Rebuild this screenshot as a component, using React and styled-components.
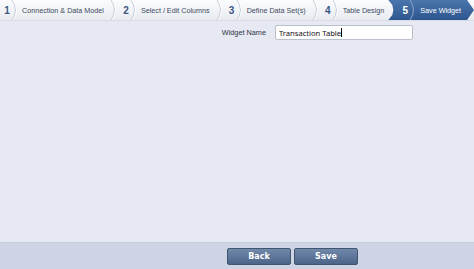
import styled, { createGlobalStyle } from "styled-components";

const Global = createGlobalStyle`
  html, body { margin: 0; padding: 0; }
  body { font-family: "Liberation Sans", Arial, sans-serif; background: #e6e9f2; }
`;

const Page = styled.div`
  width: 474px;
  height: 269px;
  display: flex;
  flex-direction: column;
  background: #e6e9f2;
`;

const Steps = styled.div`
  height: 20px;
  display: flex;
  align-items: stretch;
  background: linear-gradient(#fbfcfd, #e8ebf1);
  border-bottom: 1px solid #d6dbe5;
`;

const Step = styled.div`
  display: flex;
  align-items: center;
  color: #3d4a60;
`;

const ActiveStep = styled(Step)`
  padding-right: 13px;
  color: #ffffff;
  background: linear-gradient(#4a76ad, #2e568e);
  clip-path: polygon(0 0, calc(100% - 7px) 0, 100% 50%, calc(100% - 7px) 100%, 0 100%, 4px 75%, 5px 50%, 4px 25%);
`;

const Num = styled.span`
  font-size: 10px;
  font-weight: bold;
  color: ${p => p.$active ? "#ffffff" : "#3a5684"};
  width: 8px;
  padding-left: ${p => p.$pl}px;
  text-align: center;
`;

const Label = styled.span`
  font-size: 7.2px;
  white-space: nowrap;
  padding: 0 ${p => p.$pr ?? 6}px 0 4px;
`;

const Chevron = ({ light }) => (
  <svg width="7" height="20" viewBox="0 0 7 20">
    <path d="M1 0 Q8 10 1 20" fill="none" stroke={light ? "#8aa3c7" : "#c2c8d4"} strokeWidth="1" />
    {!light && <path d="M2 0 Q9 10 2 20" fill="none" stroke="#ffffff" strokeWidth="0.8" />}
  </svg>
);

const Body = styled.div`
  flex: 1;
  display: flex;
  justify-content: flex-end;
  align-items: flex-start;
  padding: 4px 61px 0 0;
`;

const Field = styled.div`
  display: flex;
  align-items: center;
  gap: 9px;
`;

const FieldLabel = styled.label`
  font-size: 7.3px;
  color: #2c3444;
`;

const Input = styled.div`
  box-sizing: border-box;
  width: 138px;
  height: 15px;
  background: #fff;
  border: 1px solid #b9c0cc;
  border-radius: 2px;
  font-family: "Noto Sans", sans-serif;
  font-size: 7.6px;
  color: #111;
  display: flex;
  align-items: center;
  padding-left: 3px;
  &::after {
    content: "";
    width: 1px;
    height: 9px;
    background: #000;
  }
`;

const Footer = styled.div`
  height: 27px;
  background: #ced4e3;
  border-top: 1px solid #c4cbdb;
  display: flex;
  justify-content: center;
  align-items: center;
  gap: 3px;
  padding-left: 111px;
  box-sizing: border-box;
`;

const Button = styled.button`
  width: 64px;
  height: 17px;
  border: 1px solid #405670;
  border-radius: 2px;
  background: linear-gradient(#7089ab, #4b6488);
  color: #fff;
  font-family: "DejaVu Sans", sans-serif;
  font-weight: bold;
  font-size: 8px;
  padding: 0;
`;

const steps = [
  { n: 1, label: "Connection & Data Model" },
  { n: 2, label: "Select / Edit Columns" },
  { n: 3, label: "Define Data Set(s)" },
  { n: 4, label: "Table Design", pr: 4 },
];

export default function App() {
  return (
    <Page>
      <Global />
      <Steps>
        {steps.map((s, i) => (
          <Step key={s.n}>
            {i > 0 && <Chevron />}
            <Num $pl={i === 0 ? 3 : 5}>{s.n}</Num>
            <Chevron />
            <Label $pr={s.pr}>{s.label}</Label>
          </Step>
        ))}
        <ActiveStep>
          <Num $active $pl={13}>5</Num>
          <Chevron light />
          <Label $pr={0}>Save Widget</Label>
        </ActiveStep>
      </Steps>
      <Body>
        <Field>
          <FieldLabel>Widget Name</FieldLabel>
          <Input>Transaction Table</Input>
        </Field>
      </Body>
      <Footer>
        <Button>Back</Button>
        <Button>Save</Button>
      </Footer>
    </Page>
  );
}
